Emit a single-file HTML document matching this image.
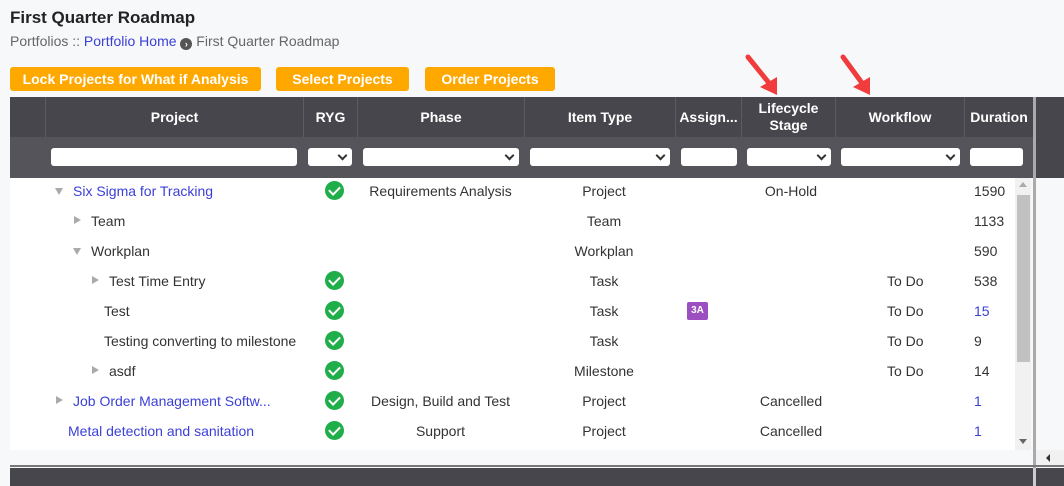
<!DOCTYPE html>
<html><head><style>
*{box-sizing:border-box;margin:0;padding:0}
body{width:1064px;height:486px;overflow:hidden;background:#f7f8fa;font-family:"Liberation Sans",sans-serif;position:relative;color:#333}
.a{position:absolute}
h1{position:absolute;left:10px;top:8px;font-size:17px;font-weight:bold;color:#222}
.bc{left:10px;top:33px;font-size:14px;color:#666}
.bc span{color:#3a3fd6}
.btn{top:67px;height:24px;background:#ffa800;color:#fff;font-weight:bold;font-size:14px;text-align:center;line-height:24px;border-radius:3px}
.hd{top:97px;height:40px;background:#47464c;left:10px;width:1023px}
.fl{top:137px;height:41px;background:#55545a;left:10px;width:1023px}
.hc{top:97px;height:40px;color:#fff;font-weight:bold;font-size:14px;text-align:center;display:flex;align-items:center;justify-content:center;line-height:17px;border-left:1px solid #5c5b61}
.in{top:148px;height:18px;background:#fff;border-radius:3px}
.sel::after{content:"";position:absolute;right:6px;top:4px;width:5px;height:5px;border-right:2px solid #333;border-bottom:2px solid #333;transform:rotate(45deg)}
.body{left:10px;top:178px;width:1005px;height:272px;background:#fff}
.t{font-size:14px;height:30px;line-height:30px;white-space:nowrap}
.c{text-align:center}
.lk{color:#3a3fd6}
.ck{width:19px;height:19px;border-radius:50%;background:#1fae4a}
.ck::after{content:"";position:absolute;left:6px;top:3px;width:5px;height:9px;border-right:2.5px solid #fff;border-bottom:2.5px solid #fff;transform:rotate(45deg)}
.tr{width:0;height:0;border-left:7px solid #aaa;border-top:4.5px solid transparent;border-bottom:4.5px solid transparent}
.td{width:0;height:0;border-top:7px solid #aaa;border-left:4.5px solid transparent;border-right:4.5px solid transparent}
</style></head><body>
<h1>First Quarter Roadmap</h1>
<div class="a bc">Portfolios :: <span>Portfolio Home</span> <b style="display:inline-block;width:12px;height:12px;border-radius:50%;background:#555;color:#fff;font-size:9px;line-height:12px;text-align:center;vertical-align:-1px">›</b> First Quarter Roadmap</div>
<div class="a btn" style="left:10px;width:251px">Lock Projects for What if Analysis</div>
<div class="a btn" style="left:276px;width:133px">Select Projects</div>
<div class="a btn" style="left:425px;width:130px">Order Projects</div>
<svg class="a" style="left:740px;top:50px" width="140" height="50"><g stroke="#f03c3c" stroke-width="5" stroke-linecap="round" fill="#f03c3c"><line x1="8" y1="7" x2="29" y2="33"/><line x1="103" y1="7" x2="122" y2="33"/></g><polygon points="20,37 37,27 37,45" fill="#f03c3c"/><polygon points="113,37 130,27 130,45" fill="#f03c3c"/></svg>
<div class="a hd"></div><div class="a fl"></div>
<div class="a" style="left:1036px;top:97px;width:28px;height:81px;background:#47464c"></div>
<div class="a hc" style="left:45px;width:258px">Project</div>
<div class="a hc" style="left:303px;width:54px">RYG</div>
<div class="a hc" style="left:357px;width:167px">Phase</div>
<div class="a hc" style="left:524px;width:151px">Item Type</div>
<div class="a hc" style="left:675px;width:66px">Assign...</div>
<div class="a hc" style="left:741px;width:94px">Lifecycle<br>Stage</div>
<div class="a hc" style="left:835px;width:129px">Workflow</div>
<div class="a hc" style="left:964px;width:69px">Duration</div>
<div class="a in" style="left:51px;width:246px"></div>
<div class="a in sel" style="left:308px;width:44px"></div>
<div class="a in sel" style="left:363px;width:156px"></div>
<div class="a in sel" style="left:530px;width:140px"></div>
<div class="a in" style="left:681px;width:56px"></div>
<div class="a in sel" style="left:747px;width:84px"></div>
<div class="a in sel" style="left:841px;width:119px"></div>
<div class="a in" style="left:970px;width:53px"></div>
<div class="a body"></div>
<div class="a" style="left:1015px;top:178px;width:16px;height:272px;background:#f1f1f1"></div>
<div class="a" style="left:1017px;top:195px;width:13px;height:167px;background:#c1c1c1"></div>
<div class="a" style="left:1019px;top:182px;border-bottom:5px solid #aaa;border-left:4px solid transparent;border-right:4px solid transparent"></div>
<div class="a" style="left:1019px;top:439px;border-top:5px solid #666;border-left:4px solid transparent;border-right:4px solid transparent"></div>
<div class="a" style="left:1033px;top:97px;width:3px;height:371px;background:#aaa"></div>
<div class="a" style="left:1036px;top:450px;width:28px;height:16px;background:#f1f1f1"></div>
<div class="a" style="left:1046px;top:454px;border-right:4px solid #333;border-top:4px solid transparent;border-bottom:4px solid transparent"></div>
<div class="a" style="left:10px;top:465px;width:1054px;height:2px;background:#777"></div>
<div class="a" style="left:10px;top:468px;width:1054px;height:18px;background:#47464c"></div>
<div class="a" style="left:1033px;top:468px;width:3px;height:18px;background:#ccc"></div>

<!-- rows -->
<div class="a td" style="left:55px;top:188px"></div>
<div class="a t lk" style="left:73px;top:176px">Six Sigma for Tracking</div>
<div class="a tr" style="left:74px;top:216px"></div>
<div class="a t" style="left:91px;top:206px">Team</div>
<div class="a td" style="left:73px;top:248px"></div>
<div class="a t" style="left:91px;top:236px">Workplan</div>
<div class="a tr" style="left:92px;top:276px"></div>
<div class="a t" style="left:109px;top:266px">Test Time Entry</div>
<div class="a t" style="left:104px;top:296px">Test</div>
<div class="a t" style="left:104px;top:326px">Testing converting to milestone</div>
<div class="a tr" style="left:92px;top:366px"></div>
<div class="a t" style="left:109px;top:356px">asdf</div>
<div class="a tr" style="left:56px;top:396px"></div>
<div class="a t lk" style="left:73px;top:386px">Job Order Management Softw...</div>
<div class="a t lk" style="left:68px;top:416px">Metal detection and sanitation</div>

<div class="a ck" style="left:325px;top:181px"></div>
<div class="a ck" style="left:325px;top:271px"></div>
<div class="a ck" style="left:325px;top:301px"></div>
<div class="a ck" style="left:325px;top:331px"></div>
<div class="a ck" style="left:325px;top:361px"></div>
<div class="a ck" style="left:325px;top:391px"></div>
<div class="a ck" style="left:325px;top:421px"></div>

<div class="a t c" style="left:357px;width:167px;top:176px">Requirements Analysis</div>
<div class="a t c" style="left:357px;width:167px;top:386px">Design, Build and Test</div>
<div class="a t c" style="left:357px;width:167px;top:416px">Support</div>

<div class="a t c" style="left:524px;width:160px;top:176px">Project</div>
<div class="a t c" style="left:524px;width:160px;top:206px">Team</div>
<div class="a t c" style="left:524px;width:160px;top:236px">Workplan</div>
<div class="a t c" style="left:524px;width:160px;top:266px">Task</div>
<div class="a t c" style="left:524px;width:160px;top:296px">Task</div>
<div class="a t c" style="left:524px;width:160px;top:326px">Task</div>
<div class="a t c" style="left:524px;width:160px;top:356px">Milestone</div>
<div class="a t c" style="left:524px;width:160px;top:386px">Project</div>
<div class="a t c" style="left:524px;width:160px;top:416px">Project</div>

<div class="a" style="left:687px;top:302px;width:21px;height:18px;background:#9b4fc0;color:#fff;font-size:10px;font-weight:bold;text-align:center;line-height:18px;border-radius:2px">3A</div>

<div class="a t c" style="left:741px;width:100px;top:176px">On-Hold</div>
<div class="a t c" style="left:741px;width:100px;top:386px">Cancelled</div>
<div class="a t c" style="left:741px;width:100px;top:416px">Cancelled</div>

<div class="a t" style="left:887px;top:266px">To Do</div>
<div class="a t" style="left:887px;top:296px">To Do</div>
<div class="a t" style="left:887px;top:326px">To Do</div>
<div class="a t" style="left:887px;top:356px">To Do</div>

<div class="a t" style="left:974px;top:176px">1590</div>
<div class="a t" style="left:974px;top:206px">1133</div>
<div class="a t" style="left:974px;top:236px">590</div>
<div class="a t" style="left:974px;top:266px">538</div>
<div class="a t lk" style="left:974px;top:296px">15</div>
<div class="a t" style="left:974px;top:326px">9</div>
<div class="a t" style="left:974px;top:356px">14</div>
<div class="a t lk" style="left:974px;top:386px">1</div>
<div class="a t lk" style="left:974px;top:416px">1</div>
</body></html>
